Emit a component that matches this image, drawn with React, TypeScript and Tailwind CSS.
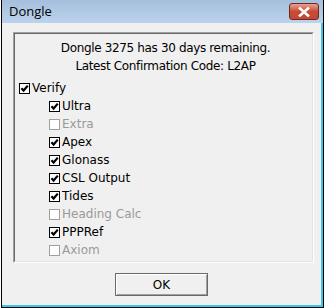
import React from 'react';

const FONT = { fontFamily: '"DejaVu Sans", Verdana, sans-serif' };

type Item = { label: string; checked: boolean; disabled?: boolean };

const CHILDREN: Item[] = [
  { label: 'Ultra', checked: true },
  { label: 'Extra', checked: false, disabled: true },
  { label: 'Apex', checked: true },
  { label: 'Glonass', checked: true },
  { label: 'CSL Output', checked: true },
  { label: 'Tides', checked: true },
  { label: 'Heading Calc', checked: false, disabled: true },
  { label: 'PPPRef', checked: true },
  { label: 'Axiom', checked: false, disabled: true },
];

function CheckRow({ label, checked, disabled }: Item) {
  return (
    <div className="flex items-center h-[18px]">
      <span
        className={
          'w-[11px] h-[11px] flex items-center justify-center bg-white border ' +
          (disabled ? 'border-[#a0a0a0] bg-[#f4f4f4]' : 'border-black')
        }
      >
        {checked && (
          <svg width="9" height="9" viewBox="0 0 9 9">
            <path d="M1.4 4.2 L3.6 6.5 L7.8 1.6" fill="none" stroke="#000" strokeWidth="2.2" />
          </svg>
        )}
      </span>
      <span className={'ml-[2px] text-[12px] leading-none ' + (disabled ? 'text-[#9a9a9a]' : 'text-black')}>
        {label}
      </span>
    </div>
  );
}

export default function App() {
  return (
    <div className="w-[324px] h-[308px] bg-white flex" style={FONT}>
      <div className="ml-[1px] w-[323px] h-[308px] flex flex-col border-l border-r border-b border-black">
        {/* title bar */}
        <div className="h-[23px] flex items-center justify-between bg-gradient-to-b from-[#a4bedc] to-[#bcd3ec]">
          <span className="pl-[7px] text-[13px] text-black" style={{ fontFamily: '"Open Sans", "Noto Sans", sans-serif' }}>
            Dongle
          </span>
          <div className="mr-[4px] w-[30px] h-[17px] rounded-[3px] border border-[#6e2a22] bg-gradient-to-b from-[#e8a190] via-[#c94a35] to-[#c44a36] flex items-center justify-center">
            <svg width="12" height="10" viewBox="0 0 12 10">
              <path d="M2 1.5 L10 8.5 M10 1.5 L2 8.5" stroke="#fff" strokeWidth="2.6" strokeLinecap="square" />
            </svg>
          </div>
        </div>

        {/* body */}
        <div className="flex-1 flex flex-col bg-[#f0f0f0] border-r-2 border-b-2 border-[#3fc3ea]">
          <div className="mt-[9px] ml-[11px] mr-[7px] h-[231px] border-t border-l border-[#a0a0a0] border-r border-b border-r-white border-b-white">
            <div className="h-full border-t border-l border-[#696969] border-r border-b border-r-[#e3e3e3] border-b-[#e3e3e3] pl-[4px] pt-[5px]">
              <div className="text-[12px] text-black text-center leading-[18px] tracking-[-0.35px]">
                <div>Dongle 3275 has 30 days remaining.</div>
                <div>Latest Confirmation Code: L2AP</div>
              </div>
              <div className="mt-[4px]">
                <CheckRow label="Verify" checked />
                <div className="pl-[30px]">
                  {CHILDREN.map(c => (
                    <CheckRow key={c.label} {...c} />
                  ))}
                </div>
              </div>
            </div>
          </div>
          <div className="mt-[10px] flex justify-center">
            <button className="w-[93px] h-[23px] bg-[#f0f0f0] border border-[#696969] shadow-[inset_1px_1px_0_#ffffff,inset_-1px_-1px_0_#a0a0a0] text-[12px] text-black">
              OK
            </button>
          </div>
        </div>
      </div>
    </div>
  );
}
